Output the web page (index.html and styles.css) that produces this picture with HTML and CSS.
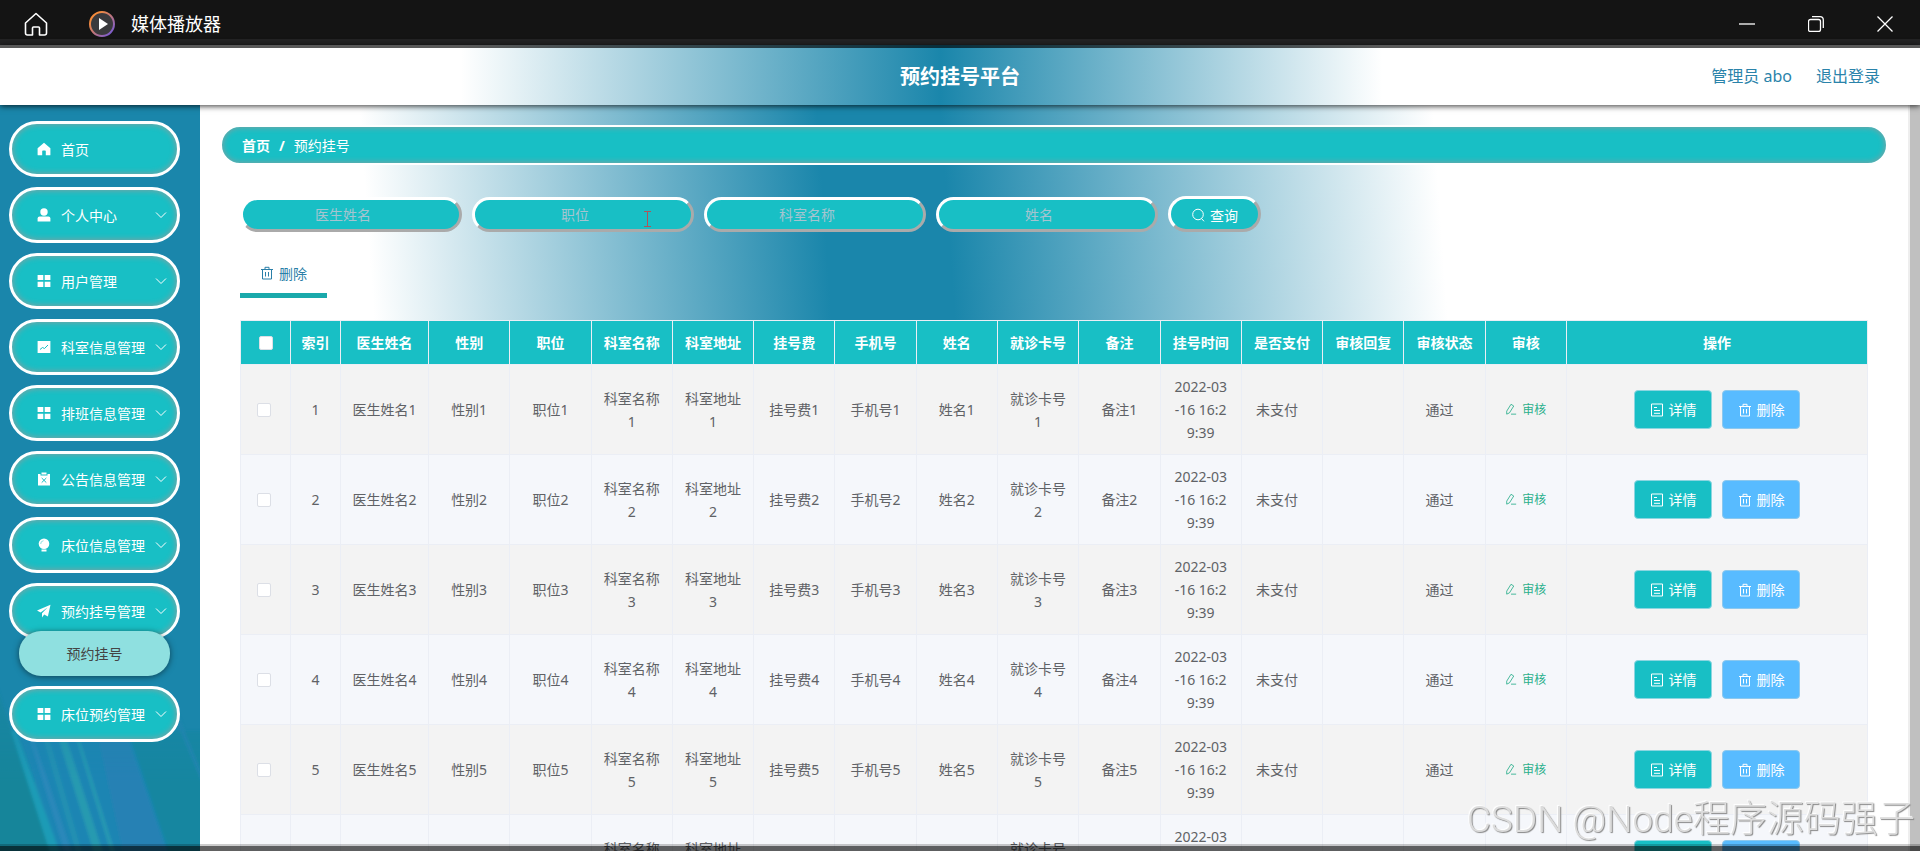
FILE: index.html
```html
<!DOCTYPE html>
<html lang="zh-CN">
<head>
    <meta charset="UTF-8">
    <meta name="viewport" content="width=device-width, initial-scale=1.0">
    <title>预约挂号平台</title>
    <link rel="stylesheet" href="styles.css">
</head>
<body>
    <!-- Icon set -->
    <svg class="sprite" aria-hidden="true">
        <symbol id="i-home" viewBox="0 0 14 14"><path fill="currentColor" d="M7 .8 13.4 6.300v6.400q0 .5-.5.5H8.800V9.200q0-.8-.8-.8H6q-.8 0-.8.8v4H1.100q-.5 0-.5-.5V6.300z"/></symbol>
        <symbol id="i-user" viewBox="0 0 14 14"><circle cx="7" cy="4" r="3.700" fill="currentColor"/><path fill="currentColor" d="M.6 13.500V10.500q0-2 2-2h8.800q2 0 2 2v3z"/></symbol>
        <symbol id="i-menu" viewBox="0 0 14 14"><path fill="currentColor" d="M.6 1h5.700v5H.6zM7.700 1h5.700v5H7.700zM.6 7.700h5.700v5.300H.6zM7.700 7.700h5.700v5.300H7.700z"/></symbol>
        <symbol id="i-chart" viewBox="0 0 14 14"><path fill="currentColor" d="M.6 1h12.800v12H.6z"/><path d="m3 9.500 2.500-2 2 1L11 5" fill="none" stroke="#18bfc5"/></symbol>
        <symbol id="i-board" viewBox="0 0 14 14"><path fill="currentColor" d="M1 2h2.500v1.500h7V2H13v11.500H1zM4.500.5h5v2h-5z"/><path d="m4.700 6 4.600 4.600M9.300 6l-4.600 4.600" stroke="#18bfc5"/></symbol>
        <symbol id="i-bulb" viewBox="0 0 14 14"><circle cx="7" cy="5.800" r="5.300" fill="currentColor"/><path d="M4.500 11.500h5v2h-5z" fill="currentColor"/><path d="M3.700 6A3.200 3.200 0 0 1 6.500 2.700" fill="none" stroke="#8fe0e0"/></symbol>
        <symbol id="i-send" viewBox="0 0 14 14"><path fill="currentColor" d="M13.500.8 0 6.500l3.600 2L10.500 3.500 5 9.200v4.300l2.200-2.900 3.700 1.900z"/></symbol>
        <symbol id="i-down" viewBox="0 0 12 12"><path d="m1 3.500 5 5 5-5" fill="none" stroke="currentColor"/></symbol>
        <symbol id="i-trash" viewBox="0 0 14 14"><path d="M1 3.500h12M2.500 3.500v9.500h9V3.500M5 3V1.300h4V3M5.500 6v4.500M8.500 6v4.500" fill="none" stroke="currentColor"/></symbol>
        <symbol id="i-doc" viewBox="0 0 14 14"><path d="M1.500 1h11v12h-11zM4 4.500h3M4 7.500h6M4 10.300h6" fill="none" stroke="currentColor"/></symbol>
        <symbol id="i-edit" viewBox="0 0 14 14"><path d="M2 9.500 7 1.500l3.200 2-5 8L2 13zM7 13h6" fill="none" stroke="currentColor"/></symbol>
        <symbol id="i-search" viewBox="0 0 14 14"><circle cx="7" cy="6.500" r="5.300" fill="none" stroke="currentColor"/><path d="m10.500 10.500 2.500 2.800" stroke="currentColor"/></symbol>
    </svg>

    <!-- Player title bar -->
    <div class="titlebar">
        <svg class="tb-home" viewBox="0 0 24 24"><path d="M1.500 11 12 1.500 22.500 11v10q0 2-2 2H15.500v-7q0-1-1-1h-5q-1 0-1 1v7H3.500q-2 0-2-2z" fill="none" stroke="#fff" stroke-width="1.600" stroke-linejoin="round"/></svg>
        <svg class="tb-logo" viewBox="0 0 26 26">
            <defs><linearGradient id="ring" x1="0" y1="0" x2="1" y2="1"><stop offset=".2" stop-color="#f58b3c"/><stop offset=".9" stop-color="#7a5bd0"/></linearGradient></defs>
            <circle cx="13" cy="13" r="12" fill="#3a3a3d" stroke="url(#ring)" stroke-width="2"/>
            <path d="M10 7v12l9-6z" fill="#fff"/>
        </svg>
        <span class="tb-name">媒体播放器</span>
        <button type="button" class="tb-btn" aria-label="最小化"><svg viewBox="0 0 16 16"><path d="M0 8h16" stroke="#fff" stroke-width="1.300"/></svg></button>
        <button type="button" class="tb-btn" aria-label="还原"><svg viewBox="0 0 16 16"><path d="M2.500 3.500h8q2 0 2 2v8q0 2-2 2h-8q-2 0-2-2v-8q0-2 2-2zM4 .7h8q3.300 0 3.300 3.300v8" fill="none" stroke="#fff" stroke-width="1.300"/></svg></button>
        <button type="button" class="tb-btn" aria-label="关闭"><svg viewBox="0 0 16 16"><path d="m.5.5 15 15M15.500.5l-15 15" stroke="#fff" stroke-width="1.300"/></svg></button>
    </div>

    <!-- Header -->
    <header class="header">
        <h1>预约挂号平台</h1>
        <nav class="header-links">
            <a href="#">管理员 abo</a>
            <a href="#">退出登录</a>
        </nav>
    </header>

    <div class="layout">
        <!-- Side menu -->
        <aside class="sidebar">
            <svg class="streaks" viewBox="0 0 200 230" preserveAspectRatio="none" aria-hidden="true">
                <defs>
                    <filter id="soft"><feGaussianBlur stdDeviation="1.500"/></filter>
                    <linearGradient id="fade" x1="0" y1="0" x2="0" y2="1"><stop offset="0" stop-color="#fff" stop-opacity="0"/><stop offset=".7" stop-color="#fff"/></linearGradient>
                    <mask id="m"><path d="M0 0h200v230H0z" fill="url(#fade)"/></mask>
                </defs>
                <g filter="url(#soft)" mask="url(#m)">
                    <path d="M-5 60 15 120 54 235H-5z" fill="#18859a"/>
                    <path d="M125 110h80v125h-35z" fill="#1786a0"/>
                    <path d="M18 110h110l42 125H60z" fill="#1c85b3"/>
                    <path d="M11 110h5l45 125h-10z" fill="#1d9bb6"/>
                    <path d="M27 110h4l42 125h-7z" fill="#2b88ba"/>
                    <path d="M41 110h6l36 125h-6z" fill="#2290b2"/>
                    <path d="M56 110h8l40 125h-9z" fill="#259ab0"/>
                    <path d="M74 110h3l39 125h-4z" fill="#289ab2"/>
                    <path d="M97 110h28l43 125h-44z" fill="#2781b4"/>
                    <path d="M172 90h4l29 70v8z" fill="#2484b0"/>
                </g>
            </svg>
            <ul class="menu">
                <li><a href="#" class="menu-item"><svg><use href="#i-home"/></svg><span>首页</span></a></li>
                <li><a href="#" class="menu-item"><svg><use href="#i-user"/></svg><span>个人中心</span><svg class="arrow"><use href="#i-down"/></svg></a></li>
                <li><a href="#" class="menu-item"><svg><use href="#i-menu"/></svg><span>用户管理</span><svg class="arrow"><use href="#i-down"/></svg></a></li>
                <li><a href="#" class="menu-item"><svg><use href="#i-chart"/></svg><span>科室信息管理</span><svg class="arrow"><use href="#i-down"/></svg></a></li>
                <li><a href="#" class="menu-item"><svg><use href="#i-menu"/></svg><span>排班信息管理</span><svg class="arrow"><use href="#i-down"/></svg></a></li>
                <li><a href="#" class="menu-item"><svg><use href="#i-board"/></svg><span>公告信息管理</span><svg class="arrow"><use href="#i-down"/></svg></a></li>
                <li><a href="#" class="menu-item"><svg><use href="#i-bulb"/></svg><span>床位信息管理</span><svg class="arrow"><use href="#i-down"/></svg></a></li>
                <li>
                    <a href="#" class="menu-item"><svg><use href="#i-send"/></svg><span>预约挂号管理</span><svg class="arrow"><use href="#i-down"/></svg></a>
                    <a href="#" class="submenu-item">预约挂号</a>
                </li>
                <li><a href="#" class="menu-item"><svg><use href="#i-menu"/></svg><span>床位预约管理</span><svg class="arrow"><use href="#i-down"/></svg></a></li>
            </ul>
        </aside>

        <main class="main">
            <nav class="breadcrumb"><a href="#">首页</a><b>/</b><span>预约挂号</span></nav>

            <div class="content">
                <form class="search">
                    <input type="text" placeholder="医生姓名" aria-label="医生姓名">
                    <div class="field">
                        <input type="text" placeholder="职位" aria-label="职位">
                        <svg class="caret" viewBox="0 0 7 16"><path d="M0 .5h7M0 15.500h7M3.500 0v16" stroke="#b0545a" fill="none"/></svg>
                    </div>
                    <input type="text" placeholder="科室名称" aria-label="科室名称">
                    <input type="text" placeholder="姓名" aria-label="姓名">
                    <button type="button" class="search-btn"><svg><use href="#i-search"/></svg>查询</button>
                </form>

                <button type="button" class="delete-all"><svg><use href="#i-trash"/></svg>删除</button>

                <table class="list">
                    <colgroup>
                        <col class="col-check"><col class="col-index"><col class="col-name">
                        <col span="14">
                        <col class="col-action">
                    </colgroup>
                    <thead>
                        <tr>
                            <th><input type="checkbox" aria-label="全选"></th>
                            <th>索引</th><th>医生姓名</th><th>性别</th><th>职位</th><th>科室名称</th><th>科室地址</th>
                            <th>挂号费</th><th>手机号</th><th>姓名</th><th>就诊卡号</th><th>备注</th><th>挂号时间</th>
                            <th>是否支付</th><th>审核回复</th><th>审核状态</th><th>审核</th><th>操作</th>
                        </tr>
                    </thead>
                    <tbody id="rows"></tbody>
                </table>
            </div>
        </main>
        <div class="scrollbar"></div>
    </div>

    <div class="player-edge"></div>
    <div class="watermark">CSDN @Node程序源码强子</div>

    <script>
        // Build the appointment rows
        const fields = ['医生姓名', '性别', '职位', '科室名称', '科室地址', '挂号费', '手机号', '姓名', '就诊卡号', '备注'];
        let html = '';
        for (let i = 1; i <= 6; i++) {
            html += `<tr>
                <td><input type="checkbox" aria-label="选择${i}"></td>
                <td>${i}</td>
                ${fields.map(name => `<td>${name}${i}</td>`).join('')}
                <td>2022-03<br>-16 16:2<br>9:39</td>
                <td><span class="state">未支付</span></td>
                <td></td>
                <td><span class="state">通过</span></td>
                <td><button type="button" class="review"><svg><use href="#i-edit"/></svg>审核</button></td>
                <td><div class="actions">
                    <button type="button" class="btn"><svg><use href="#i-doc"/></svg>详情</button>
                    <button type="button" class="btn btn-delete"><svg><use href="#i-trash"/></svg>删除</button>
                </div></td>
            </tr>`;
        }
        document.getElementById('rows').innerHTML = html;
    </script>
</body>
</html>
```
FILE: styles.css
```css
* {
    box-sizing: border-box;
}

body {
    margin: 0;
    height: 100vh;
    display: flex;
    flex-direction: column;
    overflow: hidden;
    font-family: "Noto Sans", "Noto Sans CJK SC", sans-serif;
    font-size: 14px;
    color: #606266;
    background: #fff;
}

a {
    color: inherit;
    text-decoration: none;
}

button,
input {
    font: inherit;
    margin: 0;
}

button {
    cursor: pointer;
}

svg {
    width: 14px;
    height: 14px;
    flex: none;
}

.sprite {
    position: absolute;
    width: 0;
    height: 0;
}

/* Title bar */
.titlebar {
    flex: none;
    display: flex;
    align-items: center;
    height: 45px;
    padding: 0 8px 0 24px;
    background: #141414;
    border-bottom: 6px solid #232324;
    color: #fff;
}

.tb-home {
    width: 24px;
    height: 24px;
    margin-top: 8px;
}

.tb-logo {
    width: 26px;
    height: 26px;
    margin: 8px 16px 0 41px;
}

.tb-name {
    flex: 1;
    margin-top: 8px;
    font-size: 18px;
    line-height: 24px;
}

.tb-btn {
    display: flex;
    justify-content: center;
    width: 55px;
    margin: 8px 0 0 14px;
    padding: 0;
    border: 0;
    background: none;
}

.tb-btn svg {
    width: 16px;
    height: 16px;
}

/* Header */
.header {
    flex: none;
    position: relative;
    z-index: 2;
    display: grid;
    grid-template-columns: 1fr auto 1fr;
    align-items: center;
    height: 60px;
    padding: 0 40px;
    background: linear-gradient(90deg, #fff 24%, #1a86ab 49%, #fff 72%);
    box-shadow: inset 0 3px rgba(0, 0, 0, 0.65), 0 1px 6px rgba(0, 0, 0, 0.8);
}

.header h1 {
    grid-column: 2;
    margin: 0;
    font-size: 20px;
    color: #fff;
}

.header-links {
    justify-self: end;
    display: flex;
    gap: 24px;
    font-size: 16px;
    color: #2a83aa;
}

.layout {
    flex: 1;
    display: flex;
    min-height: 0;
}

/* Side menu */
.sidebar {
    position: relative;
    flex: none;
    width: 200px;
    padding: 16px 20px 0 9px;
    background: #1a86ab;
    overflow: hidden;
}

.streaks {
    position: absolute;
    left: 0;
    bottom: 0;
    width: 100%;
    height: 230px;
}

.menu {
    position: relative;
    display: flex;
    flex-direction: column;
    gap: 10px;
    margin: 0;
    padding: 0;
    list-style: none;
}

.menu-item {
    display: flex;
    align-items: center;
    gap: 10px;
    height: 56px;
    padding: 0 10px 0 25px;
    border: 3px solid #fff;
    border-radius: 28px;
    background: #18bfc5;
    box-shadow: inset 0 0 6px #999;
    color: #fff;
    white-space: nowrap;
}

.menu-item .arrow {
    width: 12px;
    height: 12px;
    margin-left: auto;
}

.submenu-item {
    position: relative;
    display: block;
    height: 45px;
    margin: -8px 10px 0;
    border-radius: 22px;
    background: #8fe0e0;
    box-shadow: 0 1px 6px rgba(0, 0, 0, 0.5);
    color: #444;
    line-height: 45px;
    text-align: center;
}

/* Main area */
.main {
    flex: 1;
    min-width: 0;
    padding: 20px;
    overflow: hidden;
    background: linear-gradient(86deg, #fff 12%, #1a86ab 38%, #1a86ab 45%, #fff 73%);
}

.scrollbar {
    flex: none;
    width: 12px;
    background: #c0c0c0;
    border-left: 2px solid #eee;
}

.breadcrumb {
    display: flex;
    align-items: center;
    gap: 9px;
    height: 40px;
    padding: 0 20px;
    border: 2px solid #fff;
    border-radius: 20px;
    background: #18bfc5;
    box-shadow: inset 0 0 6px #999;
    color: #fff;
}

.breadcrumb a {
    font-weight: bold;
}

.content {
    padding: 31px 20px 0;
}

/* Search form */
.search {
    display: flex;
    align-items: center;
    gap: 10px;
    height: 36px;
}

.search input {
    width: 222px;
    height: 35px;
    padding: 0 30px 0 14px;
    border: 3px solid;
    border-color: #fff #aaa #aaa #fff;
    border-radius: 18px;
    background: #18bfc5;
    color: #fff;
    text-align: center;
}

.search input::placeholder {
    color: #a5c4d0;
}

.field {
    position: relative;
}

.caret {
    position: absolute;
    left: 172px;
    top: 14px;
    width: 7px;
    height: 16px;
}

.search-btn {
    display: flex;
    align-items: center;
    justify-content: center;
    gap: 5px;
    width: 93px;
    height: 36px;
    padding: 2px 0 0;
    border: 3px solid;
    border-color: #fff #aaa #aaa #fff;
    border-radius: 18px;
    background: #18bfc5;
    color: #fff;
}

.delete-all {
    display: flex;
    align-items: center;
    gap: 5px;
    height: 46px;
    margin: 20px 0 22px;
    padding: 0 20px;
    border: 0;
    border-bottom: 5px solid #1aa9ab;
    background: none;
    color: #2a7fa8;
}

/* Table */
.list {
    width: 100%;
    table-layout: fixed;
    border-collapse: collapse;
    text-align: center;
    line-height: 23px;
}

.col-check,
.col-index {
    width: 50px;
}

.col-name {
    width: 88px;
}

.col-action {
    width: 301px;
}

.list th,
.list td {
    padding: 10px;
    border: 1px solid #ebeef5;
    word-break: break-all;
}

.list th {
    padding: 10px 4px;
    background: #18bfc5;
    color: #fff;
}

.list td {
    height: 90px;
    background: #f3f3f3;
}

.list tr:nth-child(even) td {
    background: #f5f7fb;
}

.list input {
    appearance: none;
    display: block;
    width: 14px;
    height: 14px;
    margin: 0 auto;
    border: 1px solid #dcdfe6;
    border-radius: 2px;
    background: #fff;
}

.list td:first-child {
    padding-right: 14px;
}

.state {
    margin-right: 10px;
}

.review {
    display: inline-flex;
    align-items: center;
    gap: 5px;
    padding: 0;
    border: 0;
    background: none;
    font-size: 12px;
    color: #2bb08c;
}

.review svg {
    width: 12px;
    height: 12px;
}

.actions {
    display: flex;
    justify-content: center;
    gap: 10px;
}

.btn {
    display: flex;
    align-items: center;
    justify-content: center;
    gap: 5px;
    width: 78px;
    height: 39px;
    padding: 0;
    border: 1px solid #8cd5e0;
    border-radius: 4px;
    background: #18bfc5;
    color: #fff;
}

.btn-delete {
    border-color: #8cc8ee;
    background: #58bbff;
}

/* Overlays */
.player-edge {
    position: fixed;
    left: 0;
    right: 0;
    bottom: 0;
    z-index: 3;
    height: 7px;
    border-top: 2px solid rgba(0, 0, 0, 0.2);
    background: rgba(0, 0, 0, 0.62);
    background-clip: padding-box;
}

.watermark {
    position: fixed;
    right: 5px;
    bottom: 5px;
    z-index: 4;
    font-family: Roboto, "Noto Sans CJK SC", sans-serif;
    font-size: 37px;
    font-weight: 300;
    line-height: 52px;
    color: #dcdcdc;
    text-shadow: 1px 1px 1px #888, -1px -1px 1px #fff;
    white-space: nowrap;
}
```
